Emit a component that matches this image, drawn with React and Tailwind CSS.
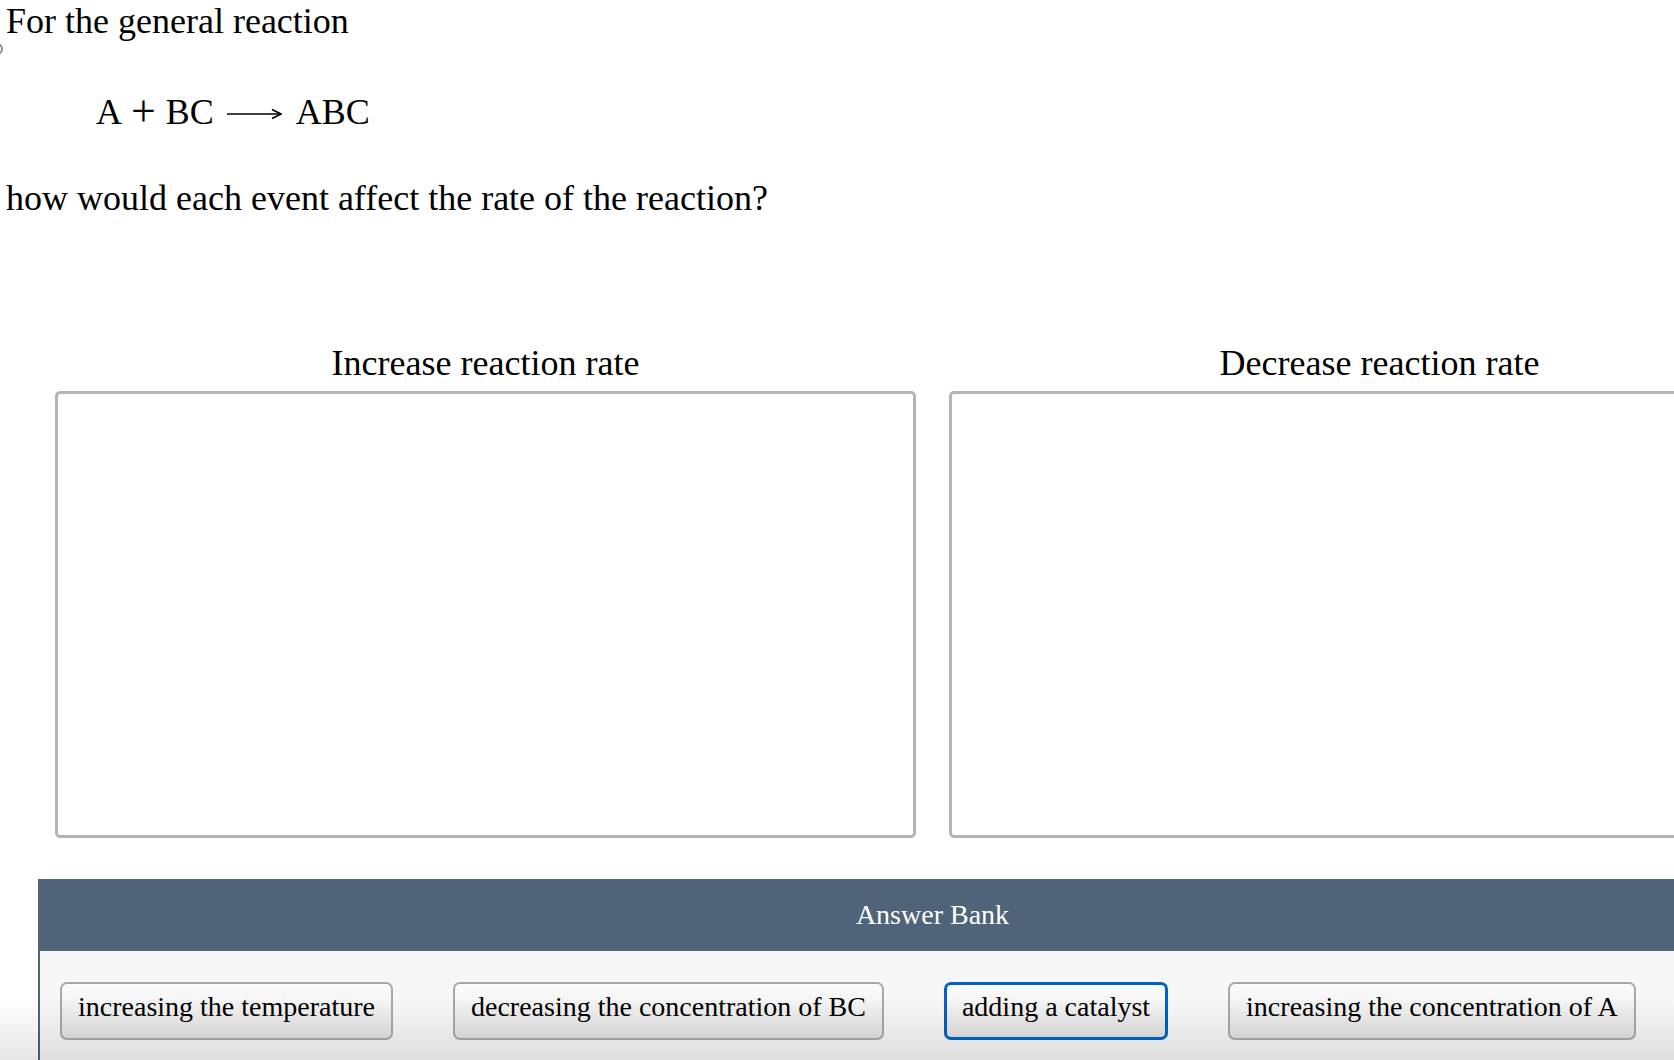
import React from "react";

const answers = [
  { label: "increasing the temperature" },
  { label: "decreasing the concentration of BC" },
  { label: "adding a catalyst", selected: true },
  { label: "increasing the concentration of A" },
];

const bins = ["Increase reaction rate", "Decrease reaction rate"];

function ReactionArrow() {
  return (
    <svg width="55" height="14" viewBox="0 0 55 14" className="translate-y-[2px]">
      <line x1="0" y1="7" x2="53" y2="7" stroke="#000" strokeWidth="1.6" />
      <path d="M45 2.5 L54 7 L45 11.5" fill="none" stroke="#000" strokeWidth="1.6" />
    </svg>
  );
}

function AnswerChip({ label, selected }) {
  const base =
    "whitespace-nowrap bg-linear-to-b from-[#fdfdfd] to-[#e2e2e2] text-[28px] leading-[32px] text-black";
  if (selected) {
    return (
      <div className={`${base} rounded-[7px] border-[3px] border-[#0062c4] px-[15px] pt-[6px] pb-[14px]`}>
        {label}
      </div>
    );
  }
  return (
    <div className={`${base} rounded-[7px] border-2 border-[#a8a8a8] px-4 pt-[7px] pb-[15px]`}>
      {label}
    </div>
  );
}

export default function App() {
  return (
    <div className="relative w-[1674px] h-[1060px] overflow-hidden bg-white text-black font-['Liberation_Serif','Times_New_Roman',serif]">
      {/* clipped marker at the left edge */}
      <span className="absolute left-[-9px] top-[43px] w-[12px] h-[12px] rounded-full border-2 border-[#8c8c8c]" />

      {/* question text */}
      <div className="pl-[6px] pt-[1px] text-[36px] leading-[40px]">
        <p>For the general reaction</p>
        <div className="mt-[51px] flex items-center pl-[90px]">
          <span>A</span>
          <span className="ml-[9px] text-[44px] leading-[40px]">+</span>
          <span className="ml-[10px]">BC</span>
          <span className="ml-[13px] flex items-center">
            <ReactionArrow />
          </span>
          <span className="ml-[14px]">ABC</span>
        </div>
        <p className="mt-[46px]">how would each event affect the rate of the reaction?</p>
      </div>

      {/* drop targets */}
      <div className="mt-[125px] ml-[55px] flex gap-[33px] w-[1760px]">
        {bins.map((title) => (
          <div key={title} className="w-[861px] shrink-0">
            <h3 className="text-center text-[36px] leading-[40px] font-normal">{title}</h3>
            <div className="mt-[8px] h-[447px] rounded-[5px] border-[3px] border-[#b4b4b4] bg-white" />
          </div>
        ))}
      </div>

      {/* answer bank */}
      <div className="mt-[41px] ml-[38px] w-[1789px]">
        <div className="h-[72px] bg-[#506479] text-white text-[28px] flex items-center justify-center">
          Answer Bank
        </div>
        <div className="h-[200px] border-l-2 border-[#506479] bg-[#f7f7f7] pt-[31px] pl-[20px] flex items-start gap-[60px]">
          {answers.map((a) => (
            <AnswerChip key={a.label} label={a.label} selected={a.selected} />
          ))}
        </div>
      </div>

      {/* shading along the bottom edge */}
      <div className="pointer-events-none absolute bottom-0 left-0 w-full h-[62px] bg-linear-to-b from-transparent to-black/10" />
    </div>
  );
}
